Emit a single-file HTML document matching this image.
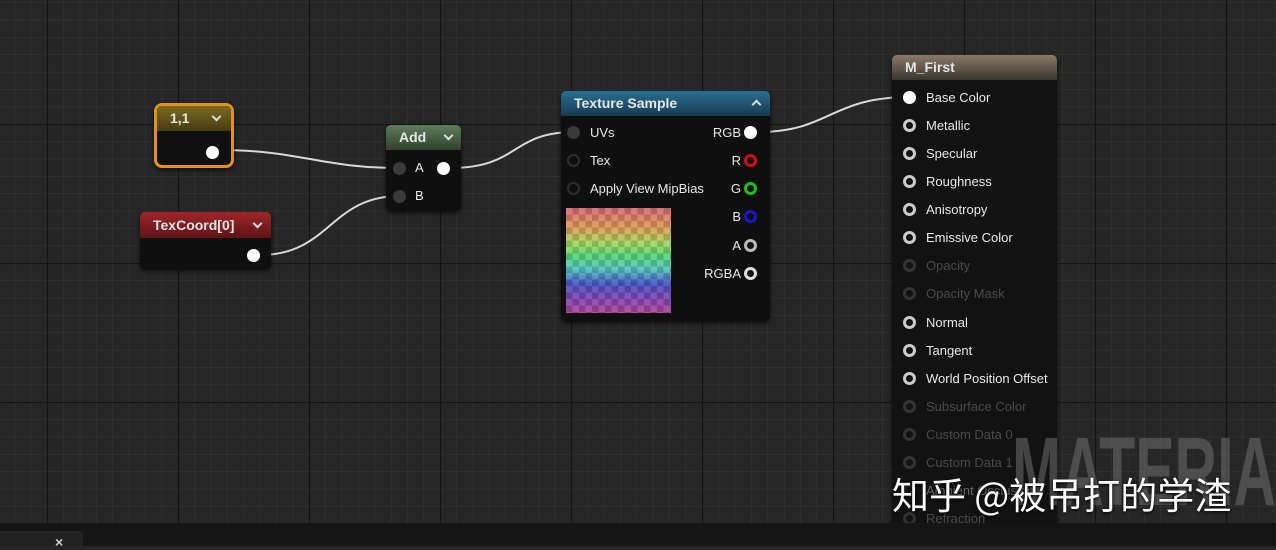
<!DOCTYPE html>
<html><head><meta charset="utf-8"><style>
*{margin:0;padding:0;box-sizing:border-box}
body{width:1276px;height:546px;overflow:hidden;background:#262626;font-family:"Liberation Sans","Noto Sans CJK SC",sans-serif;position:relative}
.node{position:absolute;background:#0f0f0f;border-radius:5px;box-shadow:0 2px 4px rgba(0,0,0,.7);}
.hdr{position:absolute;left:0;right:0;top:0;border-radius:5px 5px 0 0;color:#e6e6e6;font-weight:bold;font-size:14px;padding-left:13px}
.t{position:absolute;color:#e8e8e8;font-size:13px;white-space:nowrap}
.dim{color:#4a4a4a}
.pin{position:absolute;width:13px;height:13px;border-radius:50%}
.chev{position:absolute;width:7px;height:7px;border-right:2px solid #ddd;border-bottom:2px solid #ddd;transform:rotate(45deg)}
</style></head><body>
<svg width="1276" height="546" style="position:absolute;left:0;top:0">
<defs>
<pattern id="g" x="47" y="-15" width="16.375" height="17.375" patternUnits="userSpaceOnUse">
<path d="M0 0V17.375M0 0H16.375" stroke="#373737" stroke-width="1"/></pattern>
<pattern id="G" x="47" y="-15" width="131" height="139" patternUnits="userSpaceOnUse">
<path d="M0.5 0V139M0 0.5H131" stroke="#141414" stroke-width="1.3"/></pattern>
</defs>
<rect width="1276" height="546" fill="#262626"/>
<rect width="1276" height="546" fill="url(#g)"/>
<rect width="1276" height="546" fill="url(#G)"/>
<g fill="none" stroke="#d8d8d8" stroke-width="2">
<path d="M219 150 C300 150 320 168 400 168"/>
<path d="M260 255 C330 255 330 196 400 196"/>
<path d="M450 168 C520 168 510 132 575 132"/>
<path d="M758 132 C830 132 830 97 910 97"/>
</g>
</svg>

<!-- 1,1 node -->
<div class="node" style="left:154px;top:103px;width:80px;height:65px;border:3px solid #e4901c;border-radius:8px;background:#101010">
<div class="hdr" style="height:25px;background:linear-gradient(#7c6a20,#463c12);line-height:24px;font-size:14px;border-radius:4px 4px 0 0">1,1</div>
<div class="chev" style="left:56px;top:7px"></div>
<div class="pin" style="left:49px;top:40px;background:#fff"></div>
</div>

<!-- TexCoord -->
<div class="node" style="left:140px;top:212px;width:131px;height:57px">
<div class="hdr" style="height:26px;background:linear-gradient(#a0262a,#5e1416);line-height:26px">TexCoord[0]</div>
<div class="chev" style="left:114px;top:8px"></div>
<div class="pin" style="left:107px;top:37px;background:#fff"></div>
</div>

<!-- Add -->
<div class="node" style="left:386px;top:125px;width:75px;height:86px">
<div class="hdr" style="height:25px;background:linear-gradient(#5f7e58,#304030);line-height:25px">Add</div>
<div class="chev" style="left:59px;top:7px"></div>
<div class="pin" style="left:7px;top:37px;background:#3a3a3a"></div>
<div class="t" style="left:29px;top:35px">A</div>
<div class="pin" style="left:51px;top:37px;background:#fff"></div>
<div class="pin" style="left:7px;top:65px;background:#3a3a3a"></div>
<div class="t" style="left:29px;top:63px">B</div>
</div>

<!-- Texture Sample -->
<div class="node" style="left:561px;top:91px;width:209px;height:230px">
<div class="hdr" style="height:25px;background:linear-gradient(#2a6e92,#173a50);line-height:25px">Texture Sample</div>
<div class="chev" style="left:192px;top:10px;transform:rotate(-135deg)"></div>
<div class="pin" style="left:6px;top:35px;background:#3a3a3a"></div>
<div class="t" style="left:29px;top:34px">UVs</div>
<div class="pin" style="left:6px;top:63px;border:2px solid #2e2e2e"></div>
<div class="t" style="left:29px;top:62px">Tex</div>
<div class="pin" style="left:6px;top:91px;border:2px solid #2e2e2e"></div>
<div class="t" style="left:29px;top:90px">Apply View MipBias</div>
<div class="t" style="right:29px;top:34px">RGB</div><div class="pin" style="left:183px;top:35px;background:#fff"></div>
<div class="t" style="right:29px;top:62px">R</div><div class="pin" style="left:183px;top:63px;border:3px solid #d01010"></div>
<div class="t" style="right:29px;top:90px">G</div><div class="pin" style="left:183px;top:91px;border:3px solid #18c018"></div>
<div class="t" style="right:29px;top:118px">B</div><div class="pin" style="left:183px;top:119px;border:3px solid #1818c8"></div>
<div class="t" style="right:29px;top:147px">A</div><div class="pin" style="left:183px;top:148px;border:3px solid #bbb"></div>
<div class="t" style="right:29px;top:175px">RGBA</div><div class="pin" style="left:183px;top:176px;border:3px solid #ddd"></div>
<div style="position:absolute;left:5px;top:117px;width:105px;height:105px;background:linear-gradient(#d86a78,#e29a58 18%,#a8d860 33%,#58d878 45%,#58c8c0 58%,#4858c8 72%,#8048b8 85%,#b04898)"></div>
<div style="position:absolute;left:5px;top:117px;width:105px;height:105px;background:repeating-conic-gradient(rgba(0,0,0,.15) 0 25%,rgba(255,255,255,.06) 0 50%) 0 0/13px 13px"></div>
</div>

<!-- M_First -->
<div class="node" style="left:892px;top:55px;width:165px;height:480px;background:#121212;border-radius:6px">
<div class="hdr" style="height:25px;background:linear-gradient(#8a7a66,#3a3530);line-height:24px">M_First</div>
<div class="pin" style="left:11px;top:36px;background:#fff"></div><div class="t" style="left:34px;top:35px">Base Color</div>
<div class="pin" style="left:11px;top:64px;border:3px solid #ccc"></div><div class="t" style="left:34px;top:63px">Metallic</div>
<div class="pin" style="left:11px;top:92px;border:3px solid #ccc"></div><div class="t" style="left:34px;top:91px">Specular</div>
<div class="pin" style="left:11px;top:120px;border:3px solid #ccc"></div><div class="t" style="left:34px;top:119px">Roughness</div>
<div class="pin" style="left:11px;top:148px;border:3px solid #ccc"></div><div class="t" style="left:34px;top:147px">Anisotropy</div>
<div class="pin" style="left:11px;top:176px;border:3px solid #ccc"></div><div class="t" style="left:34px;top:175px">Emissive Color</div>
<div class="pin" style="left:11px;top:204px;border:3px solid #333"></div><div class="t dim" style="left:34px;top:203px">Opacity</div>
<div class="pin" style="left:11px;top:232px;border:3px solid #333"></div><div class="t dim" style="left:34px;top:231px">Opacity Mask</div>
<div class="pin" style="left:11px;top:261px;border:3px solid #ccc"></div><div class="t" style="left:34px;top:260px">Normal</div>
<div class="pin" style="left:11px;top:289px;border:3px solid #ccc"></div><div class="t" style="left:34px;top:288px">Tangent</div>
<div class="pin" style="left:11px;top:317px;border:3px solid #ccc"></div><div class="t" style="left:34px;top:316px">World Position Offset</div>
<div class="pin" style="left:11px;top:345px;border:3px solid #333"></div><div class="t dim" style="left:34px;top:344px">Subsurface Color</div>
<div class="pin" style="left:11px;top:373px;border:3px solid #333"></div><div class="t dim" style="left:34px;top:372px">Custom Data 0</div>
<div class="pin" style="left:11px;top:401px;border:3px solid #333"></div><div class="t dim" style="left:34px;top:400px">Custom Data 1</div>
<div class="pin" style="left:11px;top:429px;border:3px solid #333"></div><div class="t dim" style="left:34px;top:428px;color:#666">Ambient Occlusion</div>
<div class="pin" style="left:11px;top:457px;border:3px solid #333"></div><div class="t dim" style="left:34px;top:456px">Refraction</div>
</div>

<svg width="1276" height="546" style="position:absolute;left:0;top:0">
<text x="1012" y="505" font-family="Liberation Sans" font-weight="bold" font-size="97" fill="rgba(110,110,110,0.55)" textLength="300" lengthAdjust="spacingAndGlyphs">MATERIAL</text>
</svg>

<!-- bottom bar -->
<div style="position:absolute;left:0;top:523px;width:1276px;height:23px;background:#151515"></div>
<div style="position:absolute;left:0;top:531px;width:83px;height:15px;background:#222;border-radius:0 4px 0 0"></div>
<div style="position:absolute;left:55px;top:534px;color:#ccc;font-size:14px;font-weight:bold">×</div>

<div style="position:absolute;left:892px;top:470px;color:#fff;font-size:37px;font-family:'Noto Sans CJK SC',sans-serif;white-space:nowrap;text-shadow:0 1px 3px #000;line-height:46px">知乎 @被吊打的学渣</div>
</body></html>
